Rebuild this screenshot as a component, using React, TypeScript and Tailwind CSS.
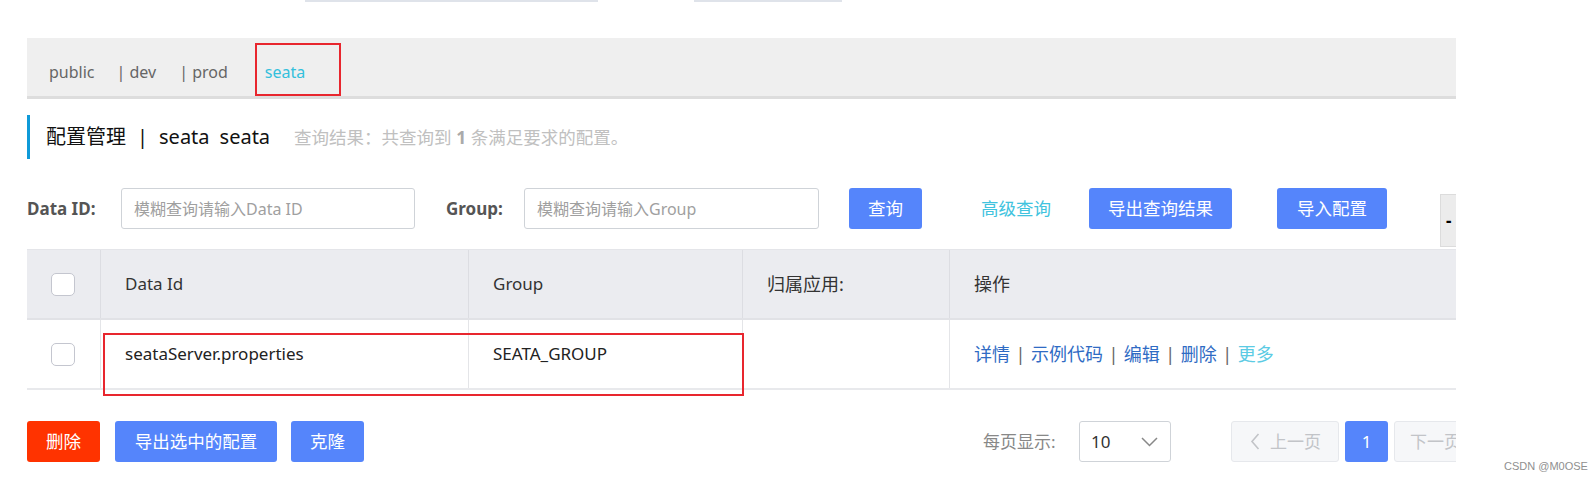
import React from "react";

const font = { fontFamily: '"Noto Sans", "Noto Sans CJK SC", sans-serif' };

function Checkbox() {
  return <div className="w-[24px] h-[23px] rounded-[5px] border border-[#c4c6cf] bg-white" />;
}

function Sep() {
  return <span className="mx-[5.5px] text-[#666]">|</span>;
}

export default function App() {
  return (
    <div className="relative w-[1595px] h-[480px] bg-white overflow-hidden text-[#333]" style={font}>
      {/* faint bottoms of controls cut off above */}
      <div className="flex h-[2px]">
        <div className="ml-[305px] w-[293px] h-[2px] bg-[#dfe3ea]" />
        <div className="ml-[96px] w-[148px] h-[2px] bg-[#dfe3ea]" />
      </div>

      <div className="relative ml-[27px] w-[1429px] overflow-hidden">
        {/* namespace tabs */}
        <div className="mt-[36px] h-[61px] bg-[#efefef] border-b-[3px] border-[#dddddd] flex items-center pt-[9px] pl-[22px] text-[16px] text-[#666] whitespace-nowrap">
          <span>public</span>
          <span className="ml-[22px]">| dev</span>
          <span className="ml-[23px]">| prod</span>
          <span className="ml-[37px] text-[#33c0dc]">seata</span>
        </div>

        {/* title */}
        <div className="mt-[16px] h-[44px] border-l-[3px] border-[#0f9ad8] flex items-center pl-[16px] whitespace-nowrap">
          <span className="text-[20px] text-[#111]">配置管理</span>
          <span className="ml-[11px] text-[20px] text-[#111]">|</span>
          <span className="ml-[11px] text-[20px] text-[#111]">seata</span>
          <span className="ml-[10px] text-[20px] text-[#111]">seata</span>
          <span className="ml-[24px] text-[17.5px] text-[#c0c0c0]">
            查询结果：共查询到 <b className="text-[#aaa]">1</b> 条满足要求的配置。
          </span>
        </div>

        {/* search row */}
        <div className="mt-[29px] flex items-start h-[61px] whitespace-nowrap">
          <div className="h-[41px] flex items-center w-[94px] shrink-0 text-[17px] font-bold text-[#555]">Data ID:</div>
          <div className="h-[41px] w-[294px] shrink-0 border border-[#cfd3d8] rounded-[3px] flex items-center pl-[12px] text-[16px] text-[#a0a0a0]">
            模糊查询请输入Data ID
          </div>
          <div className="ml-[31px] h-[41px] w-[78px] shrink-0 flex items-center text-[17px] font-bold text-[#555]">Group:</div>
          <div className="h-[41px] w-[295px] shrink-0 border border-[#cfd3d8] rounded-[3px] flex items-center pl-[12px] text-[16px] text-[#a0a0a0]">
            模糊查询请输入Group
          </div>
          <div className="ml-[30px] h-[41px] w-[73px] shrink-0 rounded-[3px] bg-[#5585fb] text-white text-[17.5px] flex items-center justify-center">查询</div>
          <div className="ml-[59px] h-[41px] w-[72px] shrink-0 flex items-center text-[17.5px] text-[#41c3de]">高级查询</div>
          <div className="ml-[36px] h-[41px] w-[143px] shrink-0 rounded-[3px] bg-[#5585fb] text-white text-[17.5px] flex items-center justify-center">导出查询结果</div>
          <div className="ml-[45px] h-[41px] w-[110px] shrink-0 rounded-[3px] bg-[#5585fb] text-white text-[17.5px] flex items-center justify-center">导入配置</div>
          <div className="ml-[53px] mt-[6px] h-[53px] w-[30px] shrink-0 bg-[#ececec] border border-[#dcdcdc] flex items-center pl-[5px] text-[17px] font-bold text-black">-</div>
        </div>

        {/* table */}
        <div className="relative border-t border-[#e4e5e9]">
          <div className="flex h-[70px] bg-[#ebecf0] border-b-2 border-[#e1e2e6] text-[17px] text-[#333] whitespace-nowrap">
            <div className="w-[74px] flex items-center pl-[24px] border-r border-[#dcdde2]"><Checkbox /></div>
            <div className="w-[368px] flex items-center pl-[24px] border-r border-[#dcdde2]">Data Id</div>
            <div className="w-[274px] flex items-center pl-[24px] border-r border-[#dcdde2]">Group</div>
            <div className="w-[207px] flex items-center pl-[24px] border-r border-[#dcdde2] text-[18px]">归属应用:</div>
            <div className="flex-1 flex items-center pl-[24px] text-[18px]">操作</div>
          </div>
          <div className="flex h-[70px] border-b-2 border-[#e8e9ec] text-[17px] text-[#222] whitespace-nowrap">
            <div className="w-[74px] flex items-center pl-[24px] border-r border-[#e4e5e8]"><Checkbox /></div>
            <div className="w-[368px] flex items-center pl-[24px] border-r border-[#e4e5e8]">seataServer.properties</div>
            <div className="w-[274px] flex items-center pl-[24px] border-r border-[#e4e5e8]">SEATA_GROUP</div>
            <div className="w-[207px] flex items-center border-r border-[#e4e5e8]" />
            <div className="flex-1 flex items-center pl-[24px] text-[18px] text-[#2f6bc4]">
              <span>详情</span>
              <Sep />
              <span>示例代码</span>
              <Sep />
              <span>编辑</span>
              <Sep />
              <span>删除</span>
              <Sep />
              <span className="text-[#5ccbe4]">更多</span>
            </div>
          </div>
          {/* red annotation box */}
          <div className="absolute left-[76px] top-[83px] w-[641px] h-[63px] border-2 border-[#e8262e] pointer-events-none" />
        </div>

        {/* bottom bar */}
        <div className="mt-[31px] flex items-center h-[41px] whitespace-nowrap">
          <div className="h-[41px] w-[73px] shrink-0 rounded-[3px] bg-[#ff3300] text-white text-[17.5px] flex items-center justify-center">删除</div>
          <div className="ml-[15px] h-[41px] w-[162px] shrink-0 rounded-[3px] bg-[#5585fb] text-white text-[17.5px] flex items-center justify-center">导出选中的配置</div>
          <div className="ml-[14px] h-[41px] w-[73px] shrink-0 rounded-[3px] bg-[#5585fb] text-white text-[17.5px] flex items-center justify-center">克隆</div>
          <div className="ml-[619px] w-[96px] shrink-0 text-[17px] text-[#888]">每页显示:</div>
          <div className="h-[41px] w-[92px] shrink-0 border border-[#cfd3d8] rounded-[3px] flex items-center pl-[11px] pr-[12px] justify-between text-[17px] text-[#333]">
            <span>10</span>
            <svg width="17" height="10" viewBox="0 0 17 10" fill="none" stroke="#888" strokeWidth="1.5"><path d="M1 1l7.5 7.5L16 1" /></svg>
          </div>
          <div className="ml-[60px] h-[41px] w-[108px] shrink-0 rounded-[3px] border border-[#e6e8ec] bg-[#f6f7f9] flex items-center pl-[18px] text-[17px] text-[#c2c4c8]">
            <svg width="10" height="17" viewBox="0 0 10 17" fill="none" stroke="#c2c4c8" strokeWidth="1.6" className="mr-[10px]"><path d="M8.5 1L2 8.5l6.5 7.5" /></svg>
            上一页
          </div>
          <div className="ml-[6px] h-[41px] w-[43px] shrink-0 rounded-[3px] bg-[#5585fb] text-white text-[17px] flex items-center justify-center">1</div>
          <div className="ml-[6px] h-[41px] w-[106px] shrink-0 rounded-[3px] border border-[#e6e8ec] bg-[#f6f7f9] flex items-center pl-[15px] text-[17px] text-[#c2c4c8]">下一页</div>
        </div>
      </div>

      {/* red annotation around selected tab */}
      <div className="absolute left-[255px] top-[43px] w-[86px] h-[53px] border-2 border-[#e8262e]" />

      {/* watermark */}
      <div className="absolute left-[1504px] top-[458px] text-[11px] text-[#8f8f8f]" style={{ fontFamily: '"Liberation Sans", sans-serif' }}>CSDN @M0OSE</div>
    </div>
  );
}
